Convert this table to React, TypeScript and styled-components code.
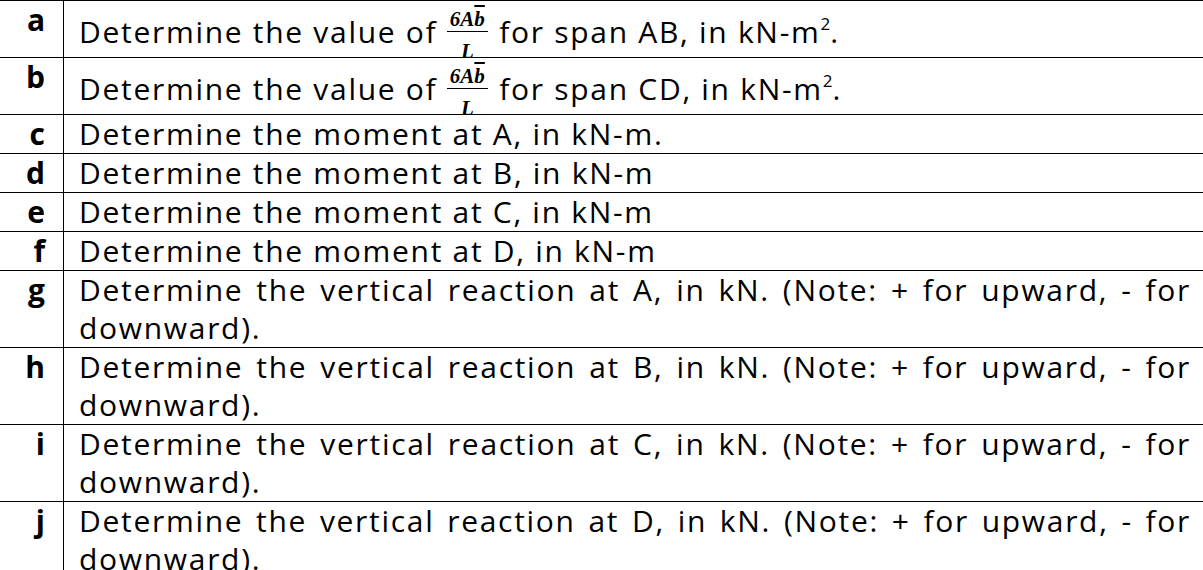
import React, { FC } from 'react';
import styled, { createGlobalStyle } from 'styled-components';

const GlobalStyle = createGlobalStyle`
  html, body {
    margin: 0;
    padding: 0;
    background: #fff;
  }
`;

interface IQuestion {
  id: string;
  text: React.ReactNode;
  tall?: boolean;
}

const Fraction: FC = () => (
  <StyledFraction>
    <span className="num">
      6A<span className="bar">b</span>
    </span>
    <span className="den">L</span>
  </StyledFraction>
);

const questions: IQuestion[] = [
  {
    id: 'a',
    tall: true,
    text: (
      <>
        Determine the value of <Fraction /> for span AB, in kN-m<sup>2</sup>.
      </>
    ),
  },
  {
    id: 'b',
    tall: true,
    text: (
      <>
        Determine the value of <Fraction /> for span CD, in kN-m<sup>2</sup>.
      </>
    ),
  },
  { id: 'c', text: 'Determine the moment at A, in kN-m.' },
  { id: 'd', text: 'Determine the moment at B, in kN-m' },
  { id: 'e', text: 'Determine the moment at C, in kN-m' },
  { id: 'f', text: 'Determine the moment at D, in kN-m' },
  { id: 'g', text: 'Determine the vertical reaction at A, in kN. (Note: + for upward, - for downward).' },
  { id: 'h', text: 'Determine the vertical reaction at B, in kN. (Note: + for upward, - for downward).' },
  { id: 'i', text: 'Determine the vertical reaction at C, in kN. (Note: + for upward, - for downward).' },
  { id: 'j', text: 'Determine the vertical reaction at D, in kN. (Note: + for upward, - for downward).' },
];

const App: FC = () => {
  return (
    <>
      <GlobalStyle />
      <Table>
        <tbody>
          {questions.map((q) => (
            <Row key={q.id}>
              <LabelCell>{q.id}</LabelCell>
              <TextCell $tall={q.tall}>
                <div className="inner">{q.text}</div>
              </TextCell>
            </Row>
          ))}
        </tbody>
      </Table>
    </>
  );
};

export default App;

const Table = styled.table`
  width: 1203px;
  border-collapse: collapse;
  table-layout: fixed;
  font-family: 'Open Sans', 'Liberation Sans', sans-serif;
  color: #000;
`;

const Row = styled.tr`
  border-top: 1px solid #000;
  border-bottom: 1px solid #000;
`;

const LabelCell = styled.td`
  width: 45px;
  padding: 0 18px 0 0;
  border-right: 1px solid #000;
  text-align: right;
  vertical-align: top;
  font-size: 30px;
  font-weight: 700;
  line-height: 38px;
`;

const TextCell = styled.td<{ $tall?: boolean }>`
  padding: 0 12px 0 15px;
  vertical-align: top;
  font-size: 30px;
  line-height: 38px;
  letter-spacing: 1.7px;
  text-align: justify;

  .inner {
    height: ${(p) => (p.$tall ? '56px' : 'auto')};
    padding-top: ${(p) => (p.$tall ? '12px' : '0')};
    box-sizing: border-box;
    overflow: hidden;
  }

  sup {
    font-size: 17px;
    line-height: 0;
    vertical-align: 13px;
    letter-spacing: 0;
  }
`;

const StyledFraction = styled.span`
  display: inline-block;
  position: relative;
  width: 41px;
  height: 0;
  border-top: 1.5px solid #000;
  vertical-align: 11px;
  margin: 0 2px 0 0;
  font-family: 'Liberation Serif', 'DejaVu Serif', serif;
  font-style: italic;
  font-weight: 700;
  font-size: 21px;
  line-height: 20px;
  letter-spacing: 0;

  .num {
    position: absolute;
    left: 0;
    right: 0;
    bottom: 3px;
    text-align: center;
  }

  .bar {
    text-decoration: overline;
  }

  .den {
    position: absolute;
    left: 0;
    right: 0;
    top: 9px;
    text-align: center;
  }
`;
